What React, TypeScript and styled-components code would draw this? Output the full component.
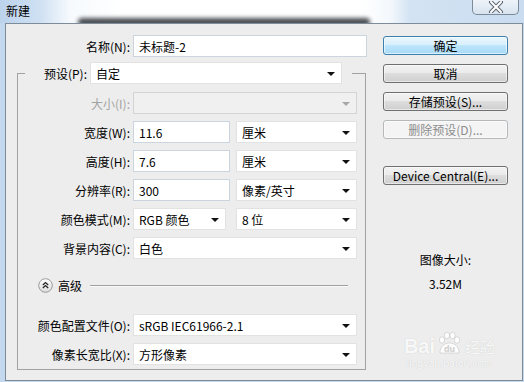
import styled, { createGlobalStyle } from "styled-components";

const GlobalStyle = createGlobalStyle`
  html, body {
    margin: 0;
    padding: 0;
    width: 524px;
    height: 382px;
    overflow: hidden;
  }
  body {
    font-family: "Noto Sans CJK SC", "Liberation Sans", sans-serif;
    font-size: 12px;
    color: #000;
  }
`;

const Window = styled.div`
  width: 524px;
  height: 382px;
  display: flex;
  flex-direction: column;
  background: #c4d8ee;
  position: relative;
  overflow: hidden;
`;

const TitleBar = styled.div`
  height: 23px;
  display: flex;
  align-items: center;
  justify-content: space-between;
  padding-left: 6px;
  position: relative;
  background: linear-gradient(
    90deg,
    #bcd3ec 0px,
    #cfe0f2 40px,
    #f6fafd 70px,
    #ffffff 120px,
    #ffffff 360px,
    #f4f8fc 390px,
    #d3e3f3 410px,
    #c9dcf0 524px
  );
  &::after {
    content: "";
    position: absolute;
    left: 78px;
    width: 292px;
    top: 18px;
    height: 8px;
    border-radius: 4px;
    background: #2a2f35;
    filter: blur(2px);
    opacity: 0.85;
  }
`;

const Title = styled.span`
  font-size: 12px;
  line-height: 14px;
  margin-top: -2px;
  position: relative;
  z-index: 1;
`;

const CloseButton = styled.div`
  align-self: flex-start;
  width: 45px;
  height: 14px;
  margin-right: 5px;
  border: 1px solid #7d8a99;
  border-top: none;
  border-radius: 0 0 5px 5px;
  background: linear-gradient(#eef3f9, #d7e3ef);
  display: flex;
  align-items: center;
  justify-content: center;
  position: relative;
  z-index: 1;
`;

const Body = styled.div`
  flex: 1;
  margin: 0 1px 1px 5px;
  border: 1px solid #7e8b99;
  background: #ededed;
  display: flex;
  position: relative;
  z-index: 2;
`;

const LeftCol = styled.div`
  width: 360px;
  padding-top: 11px;
  display: flex;
  flex-direction: column;
`;

const Row = styled.div`
  display: flex;
  align-items: center;
  height: 22px;
`;

const Label = styled.label<{ $width: number; $disabled?: boolean }>`
  width: ${({ $width }) => $width}px;
  text-align: right;
  padding-right: 3px;
  box-sizing: border-box;
  white-space: nowrap;
  color: ${({ $disabled }) => ($disabled ? "#a3a3a3" : "#000")};
  flex-shrink: 0;
`;

const TextInput = styled.div<{ $width: number }>`
  width: ${({ $width }) => $width}px;
  height: 22px;
  box-sizing: border-box;
  background: #fff;
  border: 1px solid #cbd5e0;
  padding: 0 5px;
  display: flex;
  align-items: center;
  flex-shrink: 0;
`;

const Select = styled.div<{ $width: number; $disabled?: boolean }>`
  width: ${({ $width }) => $width}px;
  height: 22px;
  box-sizing: border-box;
  background: ${({ $disabled }) => ($disabled ? "#f0f0f0" : "#fff")};
  border: 1px solid ${({ $disabled }) => ($disabled ? "#d4d4d4" : "#e2e2e2")};
  padding: 0 6px 0 5px;
  display: flex;
  align-items: center;
  justify-content: space-between;
  flex-shrink: 0;
`;

const Arrow = styled.span<{ $disabled?: boolean }>`
  width: 0;
  height: 0;
  border-left: 4px solid transparent;
  border-right: 4px solid transparent;
  border-top: 4px solid ${({ $disabled }) => ($disabled ? "#a8a8a8" : "#111")};
  margin-top: 1px;
`;

const GroupBox = styled.div`
  margin-left: 11px;
  margin-top: 5px;
  width: 349px;
  display: flex;
  flex-direction: column;
`;

const GroupHeader = styled.div`
  display: flex;
  height: 22px;
  align-items: center;
`;

const CornerLeft = styled.span`
  align-self: flex-end;
  width: 8px;
  height: 11px;
  box-sizing: border-box;
  border-top: 1px solid #a2a2a2;
  border-left: 1px solid #a2a2a2;
`;

const CornerRight = styled.span`
  align-self: flex-end;
  flex: 1;
  margin-left: 10px;
  height: 11px;
  box-sizing: border-box;
  border-top: 1px solid #a2a2a2;
  border-right: 1px solid #a2a2a2;
`;

const GroupBody = styled.div`
  border: 1px solid #a2a2a2;
  border-top: none;
  padding: 8px 0 4px;
  display: flex;
  flex-direction: column;
  gap: 7px;
`;

const FieldPair = styled.div<{ $gap?: number }>`
  display: flex;
  gap: ${({ $gap = 6 }) => $gap}px;
  align-items: center;
`;

const AdvancedRow = styled.div`
  display: flex;
  align-items: center;
  height: 15px;
  padding-left: 20px;
  margin: 12px 17px 14px 0;
`;

const ToggleIcon = styled.svg`
  width: 15px;
  height: 15px;
  flex-shrink: 0;
`;

const AdvancedText = styled.span`
  margin-left: 5px;
  margin-right: 8px;
`;

const Rule = styled.span`
  flex: 1;
  height: 0;
  border-top: 1px solid #a0a0a0;
  border-bottom: 1px solid #fbfbfb;
`;

const RightCol = styled.div`
  width: 125px;
  margin-left: 17px;
  padding-top: 12px;
  display: flex;
  flex-direction: column;
`;

const Button = styled.div<{ $variant?: "default" | "disabled" }>`
  height: 19px;
  box-sizing: border-box;
  border-radius: 3px;
  display: flex;
  align-items: center;
  justify-content: center;
  font-size: 12px;
  margin-bottom: 9px;
  border: 1px solid
    ${({ $variant }) =>
      $variant === "default"
        ? "#3c7fb1"
        : $variant === "disabled"
        ? "#b5b9bc"
        : "#707070"};
  color: ${({ $variant }) => ($variant === "disabled" ? "#8d8d8d" : "#000")};
  background: ${({ $variant }) =>
    $variant === "default"
      ? "linear-gradient(#eaf6fd 0%, #d9f0fc 45%, #bee6fd 50%, #a7d9f5 100%)"
      : $variant === "disabled"
      ? "#f4f4f4"
      : "linear-gradient(#f2f2f2 0%, #ebebeb 45%, #dddddd 50%, #cfcfcf 100%)"};
  box-shadow: inset 0 0 0 1px
    ${({ $variant }) =>
      $variant === "default" ? "rgba(255,255,255,0.6)" : "rgba(255,255,255,0.5)"};
`;

const Spacer = styled.div<{ $h: number }>`
  height: ${({ $h }) => $h}px;
  flex-shrink: 0;
`;

const SizeInfo = styled.div`
  display: flex;
  flex-direction: column;
  align-items: center;
  gap: 10px;
  line-height: 14px;
`;

const Watermark = styled.div`
  position: absolute;
  left: 396px;
  top: 307px;
  width: 95px;
  display: flex;
  flex-direction: column;
  align-items: center;
  color: rgba(255, 255, 255, 0.9);
  text-shadow: 0 0 1px rgba(120, 120, 120, 0.35);
  pointer-events: none;
  z-index: 3;
`;

const MarkTop = styled.div`
  display: flex;
  align-items: flex-end;
  gap: 1px;
  font-family: "Liberation Sans", sans-serif;
  font-weight: bold;
  font-size: 20px;
  line-height: 22px;
`;

const MarkCjk = styled.span`
  font-family: "Noto Sans CJK SC", sans-serif;
  font-weight: normal;
  font-size: 15px;
  line-height: 20px;
  margin-left: 2px;
`;

const MarkUrl = styled.div`
  font-family: "Liberation Sans", sans-serif;
  font-size: 10px;
  line-height: 12px;
  letter-spacing: 0.3px;
  margin-top: 1px;
`;

const Paw = () => (
  <svg width="26" height="26" viewBox="0 0 26 26">
    <g fill="rgba(255,255,255,0.9)" stroke="rgba(140,140,140,0.35)" strokeWidth="0.8">
      <ellipse cx="6" cy="9" rx="2.6" ry="3.2" />
      <ellipse cx="11" cy="4.5" rx="2.6" ry="3.2" />
      <ellipse cx="16.5" cy="4.5" rx="2.6" ry="3.2" />
      <ellipse cx="21" cy="9" rx="2.6" ry="3.2" />
      <path d="M4 22 C4 15 9 12 13.5 12 C18 12 23 15 23 22 Z" />
    </g>
    <text
      x="13.5"
      y="21"
      textAnchor="middle"
      fontFamily="Liberation Sans, sans-serif"
      fontWeight="bold"
      fontSize="9"
      fill="rgba(190,190,190,0.6)"
    >
      du
    </text>
  </svg>
);

const SelectField = ({
  width,
  value,
  disabled,
}: {
  width: number;
  value?: string;
  disabled?: boolean;
}) => (
  <Select $width={width} $disabled={disabled}>
    <span>{value}</span>
    <Arrow $disabled={disabled} />
  </Select>
);

export default function App() {
  return (
    <>
      <GlobalStyle />
      <Window>
        <TitleBar>
          <Title>新建</Title>
          <CloseButton>
            <svg width="16" height="12" viewBox="0 0 16 12">
              <path
                d="M3 1 L13 11 M13 1 L3 11"
                stroke="#5b6570"
                strokeWidth="4"
                strokeLinecap="round"
              />
              <path
                d="M3 1 L13 11 M13 1 L3 11"
                stroke="#ffffff"
                strokeWidth="2"
                strokeLinecap="round"
              />
            </svg>
          </CloseButton>
        </TitleBar>
        <Body>
          <LeftCol>
            <Row>
              <Label $width={127}>名称(N):</Label>
              <TextInput $width={234}>未标题-2</TextInput>
            </Row>
            <GroupBox>
              <GroupHeader>
                <CornerLeft />
                <Label $width={65}>预设(P):</Label>
                <SelectField width={252} value="自定" />
                <CornerRight />
              </GroupHeader>
              <GroupBody>
                <Row>
                  <Label $width={115} $disabled>
                    大小(I):
                  </Label>
                  <SelectField width={224} disabled />
                </Row>
                <Row>
                  <Label $width={115}>宽度(W):</Label>
                  <FieldPair>
                    <TextInput $width={97}>11.6</TextInput>
                    <SelectField width={121} value="厘米" />
                  </FieldPair>
                </Row>
                <Row>
                  <Label $width={115}>高度(H):</Label>
                  <FieldPair>
                    <TextInput $width={97}>7.6</TextInput>
                    <SelectField width={121} value="厘米" />
                  </FieldPair>
                </Row>
                <Row>
                  <Label $width={115}>分辨率(R):</Label>
                  <FieldPair>
                    <TextInput $width={97}>300</TextInput>
                    <SelectField width={121} value="像素/英寸" />
                  </FieldPair>
                </Row>
                <Row>
                  <Label $width={115}>颜色模式(M):</Label>
                  <FieldPair $gap={10}>
                    <SelectField width={93} value="RGB 颜色" />
                    <SelectField width={121} value="8 位" />
                  </FieldPair>
                </Row>
                <Row>
                  <Label $width={115}>背景内容(C):</Label>
                  <SelectField width={224} value="白色" />
                </Row>
                <AdvancedRow>
                  <ToggleIcon viewBox="0 0 15 15">
                    <defs>
                      <linearGradient id="tg" x1="0" y1="0" x2="0" y2="1">
                        <stop offset="0" stopColor="#ffffff" />
                        <stop offset="1" stopColor="#dcdcdc" />
                      </linearGradient>
                    </defs>
                    <circle cx="7.5" cy="7.5" r="6.8" fill="url(#tg)" stroke="#9a9a9a" strokeWidth="1" />
                    <path
                      d="M4.8 7 L7.5 4.6 L10.2 7 M4.8 10 L7.5 7.6 L10.2 10"
                      fill="none"
                      stroke="#222"
                      strokeWidth="1.2"
                    />
                  </ToggleIcon>
                  <AdvancedText>高级</AdvancedText>
                  <Rule />
                </AdvancedRow>
                <Row>
                  <Label $width={115}>颜色配置文件(O):</Label>
                  <SelectField width={224} value="sRGB IEC61966-2.1" />
                </Row>
                <Row>
                  <Label $width={115}>像素长宽比(X):</Label>
                  <SelectField width={224} value="方形像素" />
                </Row>
              </GroupBody>
            </GroupBox>
          </LeftCol>
          <RightCol>
            <Button $variant="default">确定</Button>
            <Button>取消</Button>
            <Button>存储预设(S)...</Button>
            <Button $variant="disabled">删除预设(D)...</Button>
            <Spacer $h={18} />
            <Button>Device Central(E)...</Button>
            <Spacer $h={59} />
            <SizeInfo>
              <span>图像大小:</span>
              <span>3.52M</span>
            </SizeInfo>
          </RightCol>
          <Watermark>
            <MarkTop>
              <span>Bai</span>
              <Paw />
              <MarkCjk>经验</MarkCjk>
            </MarkTop>
            <MarkUrl>jingyan.baidu.com</MarkUrl>
          </Watermark>
        </Body>
      </Window>
    </>
  );
}
